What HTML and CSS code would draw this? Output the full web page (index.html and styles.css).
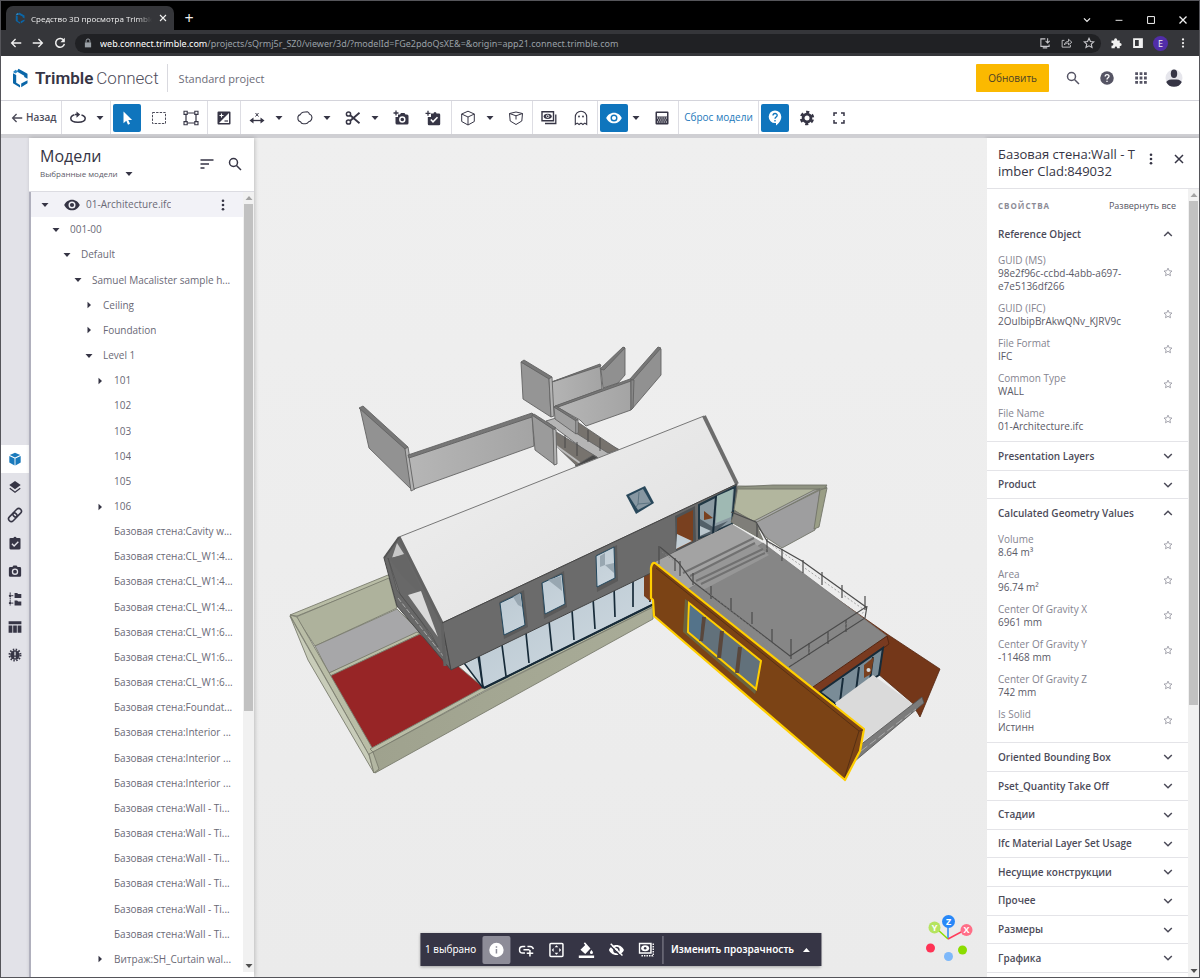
FILE: index.html
```html
<!DOCTYPE html>
<html lang="ru">
<head>
<meta charset="utf-8">
<title>Средство 3D просмотра Trimble Connect</title>
<link rel="stylesheet" href="styles.css">
</head>
<body>
<svg class="sprite" aria-hidden="true">
  <symbol id="i-logo" viewBox="0 0 18 20"><path d="M7.500 .8 16.500 5.800v5l-3.300-1.900V7.700L5.800 3.600zM2 5.200l3.200 1.900v7.700L9 16.900v2.500L2 15.200zM16.500 12.300v2.900l-6.300 4v-3.800z" fill="#0a66a8"/><path d="m4.500 1.800 2.800 1.700-3 1.900L2 4z" fill="#2b88c8"/></symbol>
  <symbol id="i-down" viewBox="0 0 8 8"><path d="M.5 2h7L4 6z"/></symbol>
  <symbol id="i-right" viewBox="0 0 8 8"><path d="M2.500 .8v6.400L6 4z"/></symbol>
  <symbol id="i-up" viewBox="0 0 8 8"><path d="M.5 6h7L4 2z"/></symbol>
  <symbol id="i-dots" viewBox="0 0 16 16"><circle cx="8" cy="3.200" r="1.500"/><circle cx="8" cy="8" r="1.500"/><circle cx="8" cy="12.800" r="1.500"/></symbol>
  <symbol id="i-search" viewBox="0 0 16 16"><g fill="none" stroke="currentColor" stroke-width="1.500"><circle cx="6.500" cy="6.500" r="4"/><path d="m9.500 9.500 4.500 4.500"/></g></symbol>
  <symbol id="i-close" viewBox="0 0 16 16"><path d="m4 4 8 8M12 4l-8 8" fill="none" stroke="currentColor" stroke-width="1.500"/></symbol>
  <symbol id="i-back" viewBox="0 0 16 16"><path d="M14 8H3M7.500 3.500 3 8l4.500 4.500" fill="none" stroke="currentColor" stroke-width="1.500"/></symbol>
  <symbol id="i-fwd" viewBox="0 0 16 16"><path d="M2 8h11M8.500 3.500 13 8l-4.500 4.500" fill="none" stroke="currentColor" stroke-width="1.500"/></symbol>
  <symbol id="i-reload" viewBox="0 0 16 16"><path d="M12.500 5.500A5 5 0 1 0 13 9" fill="none" stroke="currentColor" stroke-width="1.700"/><path d="M13.500 2v5h-5z"/></symbol>
  <symbol id="i-orbit" viewBox="0 0 16 16"><path d="M4.500 4.800C2.300 5.400.8 6.700.8 8.500c0 2.200 3 3.700 7.200 3.700s7.200-1.500 7.200-3.700c0-1.800-1.400-3-3.700-3.600M5 4.600h3" fill="none" stroke="currentColor" stroke-width="1.500"/><path d="M6.500 1.500v6.200l3.700-3.100z"/></symbol>
  <symbol id="i-cursor" viewBox="0 0 16 16"><path d="M4.500 1.500v11.800l2.800-2.600 1.700 4 2-.9-1.700-3.800h3.800z"/></symbol>
  <symbol id="i-marquee" viewBox="0 0 16 16"><path d="M1.500 2.500h13v11h-13z" fill="none" stroke="currentColor" stroke-width=".9" stroke-dasharray="2.400 1.200"/></symbol>
  <symbol id="i-area" viewBox="0 0 16 16"><path d="M3 3h10v10H3z" fill="none" stroke="currentColor" stroke-width="1.200"/><g fill="#fff" stroke="currentColor" stroke-width="1.100"><path d="M1 1.200h3.200v3.200H1zM11.800 1.200H15v3.200h-3.200zM1 11.600h3.200v3.200H1zM11.800 11.600H15v3.200h-3.200z"/></g></symbol>
  <symbol id="i-contrast" viewBox="0 0 16 16"><path d="M2.500 1.500h11a1 1 0 0 1 1 1v11a1 1 0 0 1-1 1h-11a1 1 0 0 1-1-1v-11a1 1 0 0 1 1-1z"/><path d="M13 3v10H3z" fill="#fff"/><path d="M3.500 5.500h4M5.500 3.500v4" stroke="#fff" stroke-width="1.100"/><path d="M8.500 11h3.500" stroke="currentColor" stroke-width="1.200"/></symbol>
  <symbol id="i-measure" viewBox="0 0 16 16"><path d="M2 10.500h12" stroke="currentColor" stroke-width="1.300"/><path d="M4.500 7.500v6L.5 10.500zM11.500 7.500v6l4-3z"/><path d="m6.500 3 3 3.500m0-3.500-3 3.500" stroke="currentColor" fill="none"/></symbol>
  <symbol id="i-lasso" viewBox="0 0 16 16"><path d="M6 2.300 10.300 1.800q1.700.4 2 2.100 2.600.9 2.700 3.300l-.5 2.300q-.8 2-2.800 2.200-1.300 2-3.300 2H6.200q-1.900-.2-2.700-2Q1.500 11.500 1 9.500L.9 6.800Q1.500 5 3.300 4.600 4 2.700 6 2.300z" fill="none" stroke="currentColor" stroke-width="1.100"/></symbol>
  <symbol id="i-cut" viewBox="0 0 16 16"><g fill="none" stroke="currentColor"><circle cx="3.500" cy="4" r="2.100" stroke-width="1.500"/><circle cx="3.500" cy="12" r="2.100" stroke-width="1.500"/><path d="m5.200 5.300 9.300 8M5.200 10.700l9.300-8" stroke-width="1.800"/></g></symbol>
  <symbol id="i-camadd" viewBox="0 0 16 16"><path d="M5 4.500h2L8 3h3.500l1 1.500H14a1.500 1.500 0 0 1 1.500 1.500v7a1.500 1.500 0 0 1-1.500 1.500H4A1.500 1.500 0 0 1 2.500 13V7H5z"/><circle cx="9.300" cy="9.500" r="2.500" fill="none" stroke="#fff" stroke-width="1.400"/><path d="M3 .5v5M.5 3h5" stroke="currentColor" stroke-width="1.300"/></symbol>
  <symbol id="i-taskadd" viewBox="0 0 16 16"><path d="M6 3.500h2.500a1.500 1.500 0 0 1 3 0H14a1.200 1.200 0 0 1 1.200 1.200V14a1.200 1.200 0 0 1-1.200 1.200H4A1.200 1.200 0 0 1 2.800 14V7H6z"/><path d="m5.800 9.500 2.200 2.300 4.500-4.500" fill="none" stroke="#fff" stroke-width="1.600"/><path d="M3 .8v5M.5 3.300h5" stroke="currentColor" stroke-width="1.300"/></symbol>
  <symbol id="i-cube" viewBox="0 0 16 16"><path d="M8 1.200 14.300 4v7.500L8 15l-6.300-3.500V4zM1.700 4 8 7l6.300-3M8 7v8" fill="none" stroke="currentColor" stroke-width="1"/></symbol>
  <symbol id="i-box" viewBox="0 0 16 16"><path d="M1.500 3.500 8 2l6.500 1.500-.7 7.500L8 14.500 2.200 11zM1.500 3.500 8 5.800l6.500-2.300M8 5.800v3.700" fill="none" stroke="currentColor" stroke-width="1"/></symbol>
  <symbol id="i-views" viewBox="0 0 16 16"><path d="M1 1.800h11.500v9H1z" fill="none" stroke="currentColor" stroke-width="1.400"/><path d="M14.800 4.500v9H4" fill="none" stroke="currentColor" stroke-width="1.300"/><ellipse cx="6.700" cy="6.300" rx="4" ry="2.600"/><circle cx="6.700" cy="6.300" r="1.300" fill="none" stroke="#fff" stroke-width=".9"/></symbol>
  <symbol id="i-ghost" viewBox="0 0 16 16"><path d="M2.300 14.500V7a5.700 5.700 0 0 1 11.400 0v7.500l-1.900-1.400-1.900 1.400L8 13.100l-1.900 1.400-1.900-1.400z" fill="none" stroke="currentColor" stroke-width="1.100"/><circle cx="6" cy="6.500" r=".9"/><circle cx="10" cy="6.500" r=".9"/></symbol>
  <symbol id="i-eye" viewBox="0 0 16 16"><path d="M8 2.700C4.400 2.700 1.500 5 .2 8c1.300 3 4.200 5.300 7.800 5.300S14.500 11 15.800 8C14.500 5 11.600 2.700 8 2.700zM8 4.500a3.500 3.500 0 1 1 0 7 3.500 3.500 0 0 1 0-7z" fill-rule="evenodd"/><circle cx="8" cy="8" r="2.100"/></symbol>
  <symbol id="i-halftone" viewBox="0 0 16 16"><path d="M2.500 1.500h11a1 1 0 0 1 1 1v11a1 1 0 0 1-1 1h-11a1 1 0 0 1-1-1v-11a1 1 0 0 1 1-1z"/><path d="M3 3h10v3.500H3z" fill="#fff"/><path d="M3 8h10M4 10h9M3 12h10" stroke="#fff" stroke-width="1.100" stroke-dasharray="1.200 1"/></symbol>
  <symbol id="i-helpbub" viewBox="0 0 16 16"><path d="M8 .5a6.300 6.300 0 0 1 6.300 6.300c0 4-3 7-5.300 8.700v-2.400H8A6.300 6.300 0 0 1 8 .5z"/><path d="M6 5.500c0-2.700 4.200-2.600 4.200-.2C10.200 7 8 7 8 8.800M8 10v1.400" fill="none" stroke="#0f75bd" stroke-width="1.300"/></symbol>
  <symbol id="i-gear" viewBox="0 0 16 16"><g fill="none" stroke="currentColor"><circle cx="8" cy="8" r="3.900" stroke-width="2.800"/><circle cx="8" cy="8" r="6" stroke-width="2.400" stroke-dasharray="3.140 3.140" stroke-dashoffset="-1.570"/></g></symbol>
  <symbol id="i-full" viewBox="0 0 16 16"><path d="M6 3H3v3M10 3h3v3M6 13H3v-3M10 13h3v-3" fill="none" stroke="currentColor" stroke-width="1.500"/></symbol>
  <symbol id="i-help" viewBox="0 0 16 16"><circle cx="8" cy="8" r="7.700"/><path d="M5.900 6.300c0-2.900 4.400-2.800 4.400-.2C10.300 7.800 8 7.800 8 9.700M8 11v1.600" fill="none" stroke="#fff" stroke-width="1.500"/></symbol>
  <symbol id="i-apps" viewBox="0 0 16 16"><path d="M2.200 2.200H5V5H2.200zM6.600 2.200h2.800V5H6.600zM11 2.200h2.800V5H11zM2.200 6.600H5v2.800H2.200zM6.600 6.600h2.800v2.800H6.600zM11 6.600h2.800v2.800H11zM2.200 11H5v2.800H2.200zM6.600 11h2.800v2.800H6.600zM11 11h2.800v2.800H11z"/></symbol>
  <symbol id="i-user" viewBox="0 0 18 18"><circle cx="9" cy="9" r="8.500" fill="#e6e6ec"/><ellipse cx="9" cy="4.800" rx="3.200" ry="4.200"/><path d="M1.200 13c1.500-2.500 4-2.600 7.800-2.600s6.300.1 7.800 2.600a8.700 8.700 0 0 1-15.600 0z"/></symbol>
  <symbol id="i-sort" viewBox="0 0 16 16"><path d="M1.500 4h13M1.500 8h8.500M1.500 12h4" stroke="currentColor" stroke-width="1.300"/></symbol>
  <symbol id="i-model" viewBox="0 0 16 16"><path d="m8 .8 6 2.700L8 6.200 2 3.500zM1.500 4.600l6 2.700v8l-6-3.200zM14.500 4.600l-6 2.700v8l6-3.200z"/></symbol>
  <symbol id="i-layers" viewBox="0 0 16 16"><path d="m8 1 6.500 4.800L8 10.500 1.500 5.800z"/><path d="M2 9.500 8 14l6-4.500" fill="none" stroke="currentColor" stroke-width="1.500"/></symbol>
  <symbol id="i-link" viewBox="0 0 16 16"><g fill="none" stroke="currentColor" stroke-width="1.600"><rect x="5.400" y="3" width="9.600" height="5.400" rx="2.700" transform="rotate(-45 10.200 5.700)"/><rect x="1" y="7.600" width="9.600" height="5.400" rx="2.700" transform="rotate(-45 5.800 10.300)"/></g></symbol>
  <symbol id="i-task" viewBox="0 0 16 16"><path d="M3 2.200h3.200a1.900 1.900 0 0 1 3.600 0H13a1.300 1.300 0 0 1 1.300 1.300V14a1.300 1.300 0 0 1-1.300 1.300H3A1.300 1.300 0 0 1 1.700 14V3.500A1.300 1.300 0 0 1 3 2.200z"/><path d="m4.500 8.800 2.500 2.500 4.800-4.800" fill="none" stroke="#e2e2e8" stroke-width="1.600"/></symbol>
  <symbol id="i-cam" viewBox="0 0 16 16"><path d="M2.500 3.500H5l1.200-1.700h3.600L11 3.500h2.500A1.500 1.500 0 0 1 15 5v8a1.500 1.500 0 0 1-1.500 1.500h-11A1.500 1.500 0 0 1 1 13V5a1.500 1.500 0 0 1 1.500-1.500z"/><circle cx="8" cy="8.800" r="2.900" fill="none" stroke="#e2e2e8" stroke-width="1.500"/></symbol>
  <symbol id="i-tree" viewBox="0 0 16 16"><path d="M7.500 1.200h3l1 1.200h3.700v4.400H7.500zM7.500 9.700h3l1 1.200h3.700v4.400H7.500z"/><path d="M2.500 .5v15M1 4.200h5.800M1 12.700h5.800" stroke="currentColor" stroke-width="1.100" stroke-dasharray="2.200 .7"/><circle cx="2.500" cy="4.200" r="1.400"/><circle cx="2.500" cy="12.700" r="1.400"/></symbol>
  <symbol id="i-table" viewBox="0 0 16 16"><path d="M.7 1.500h14.600v3.400H.7zM.7 6.300H5v8.200H.7zM5.900 6.300h4.200v8.200H5.900zM11 6.300h4.300v8.200H11z"/></symbol>
  <symbol id="i-issue" viewBox="0 0 16 16"><circle cx="8" cy="8" r="5.400"/><circle cx="8" cy="8" r="6.300" fill="none" stroke="currentColor" stroke-width="2.200" stroke-dasharray="1.650 1.650"/><path d="M8 4.300v4.400M8 10v1.800" stroke="#e2e2e8" stroke-width="1.500"/></symbol>
  <symbol id="i-star" viewBox="0 0 16 16"><path d="m8 1.800 1.900 4.200 4.500.5-3.400 3 1 4.500-4-2.300L4 14l1-4.500-3.400-3 4.500-.5z" fill="none" stroke="currentColor" stroke-width="1.500"/></symbol>
  <symbol id="i-chevd" viewBox="0 0 10 10"><path d="m1.200 3 3.800 3.800L8.800 3" fill="none" stroke="currentColor" stroke-width="1.500"/></symbol>
  <symbol id="i-chevu" viewBox="0 0 10 10"><path d="m1.200 7 3.800-3.800L8.800 7" fill="none" stroke="currentColor" stroke-width="1.500"/></symbol>
  <symbol id="i-info" viewBox="0 0 16 16"><circle cx="8" cy="8" r="7.200"/><path d="M8 7v4.500M8 4.300v1.500" stroke="#8d8c98" stroke-width="1.500"/></symbol>
  <symbol id="i-linkadd" viewBox="0 0 16 16"><path d="M6.500 11H4.300a3.300 3.300 0 0 1 0-6.600h2.500M9 4.400h2.700a3.300 3.300 0 0 1 3.200 2.800M5 7.700h6M11.500 8v6.500M8.300 11.300h6.500" fill="none" stroke="currentColor" stroke-width="1.500"/></symbol>
  <symbol id="i-fit" viewBox="0 0 16 16"><rect x="1.500" y="1.500" width="13" height="13" rx="1" fill="none" stroke="currentColor" stroke-width="1.500"/><path d="m8 3.300 1.900 1.900H6.100zM8 12.700l1.900-1.900H6.100zM3.300 8l1.900-1.900v3.800zM12.700 8l-1.900-1.900v3.800z"/></symbol>
  <symbol id="i-fill" viewBox="0 0 16 16"><path d="M6.500 .2 5.300 1.400l1.500 1.500L2 7.700l4.800 4.300 5.200-5.400z"/><path d="M13 8s1.500 1.700 1.500 2.600a1.500 1.500 0 0 1-3 0C11.500 9.700 13 8 13 8zM.2 13.500h15.600V16H.2z"/></symbol>
  <symbol id="i-hide" viewBox="0 0 16 16"><path d="M8 3C4.500 3 1.600 5.200.5 8c1.100 2.800 4 5 7.500 5s6.400-2.200 7.500-5C14.400 5.200 11.500 3 8 3zm0 1.800a3.200 3.200 0 1 1 0 6.400 3.200 3.200 0 0 1 0-6.400z" fill-rule="evenodd"/><circle cx="8" cy="8" r="1.700"/><path d="M1.500 3.300 13 14.800" stroke="#363545" stroke-width="1.600"/><path d="M2.300 1.800 14 13.500" stroke="currentColor" stroke-width="1.500"/></symbol>
  <symbol id="i-iso" viewBox="0 0 16 16"><path d="M1 1.500h11.500v9.500H1z" fill="none" stroke="currentColor" stroke-width="1.500"/><ellipse cx="6.700" cy="6.300" rx="4" ry="3"/><circle cx="6.700" cy="6.300" r="1.300" fill="#363545"/><path d="M14.800 1.500v12.800M3 13.800h12" stroke="currentColor" stroke-width="1.400" stroke-dasharray="1.500 1"/></symbol>
  <symbol id="i-lock" viewBox="0 0 16 16"><path d="M3 7h10v8H3z"/><path d="M5 7V4.500a3 3 0 0 1 6 0V7" fill="none" stroke="currentColor" stroke-width="1.600"/></symbol>
  <symbol id="i-install" viewBox="0 0 16 16"><path d="M8.500 2.500h-6v10h11V10M5 14.500h6" fill="none" stroke="currentColor" stroke-width="1.400"/><path d="M11.500 1.500v6M8.800 5.300l2.700 2.700 2.700-2.700" fill="none" stroke="currentColor" stroke-width="1.400"/></symbol>
  <symbol id="i-share" viewBox="0 0 16 16"><path d="M4.500 4.500h-3v9h11v-3M4.500 10.500C5 7 7.500 6 10 6V3l4.500 4L10 10.500V8c-2.500 0-4 .5-5.500 2.500z" fill="none" stroke="currentColor" stroke-width="1.200"/></symbol>
  <symbol id="i-puzzle" viewBox="0 0 16 16"><path d="M2 4.500h3.500V3.700a2 2 0 0 1 4 0v.8H13V8h.5a2 2 0 0 1 0 4H13v3H9.500v-.8a1.600 1.600 0 0 0-3.200 0v.8H2v-3.500h.8a1.700 1.700 0 0 0 0-3.400H2z"/></symbol>
  <symbol id="i-side" viewBox="0 0 16 16"><path d="M1.500 1.500h13v13h-13zM4 4v8h5V4z" fill-rule="evenodd"/></symbol>
  <symbol id="i-min" viewBox="0 0 16 16"><path d="M2.500 8.500h11" stroke="currentColor" stroke-width="1.500"/></symbol>
  <symbol id="i-max" viewBox="0 0 16 16"><path d="M2.500 2.500h11v11h-11z" fill="none" stroke="currentColor" stroke-width="1.600"/></symbol>
</svg>

<header class="browser">
  <div class="tabs">
    <div class="tab"><svg class="ic12"><use href="#i-logo"/></svg><span class="tab-title">Средство 3D просмотра Trimble</span><button class="tab-x" aria-label="Закрыть вкладку"><svg class="ic12"><use href="#i-close"/></svg></button></div>
    <button class="newtab" aria-label="Новая вкладка">+</button>
    <div class="winbtns">
      <button aria-label="Поиск вкладок"><svg class="ic8"><use href="#i-chevd"/></svg></button>
      <button aria-label="Свернуть"><svg class="ic10"><use href="#i-min"/></svg></button>
      <button aria-label="Развернуть"><svg class="ic10"><use href="#i-max"/></svg></button>
      <button aria-label="Закрыть"><svg class="ic14"><use href="#i-close"/></svg></button>
    </div>
  </div>
  <div class="navbar">
    <button aria-label="Назад"><svg class="ic14"><use href="#i-back"/></svg></button>
    <button aria-label="Вперед"><svg class="ic14"><use href="#i-fwd"/></svg></button>
    <button aria-label="Обновить"><svg class="ic14"><use href="#i-reload"/></svg></button>
    <div class="omnibox">
      <svg class="ic10"><use href="#i-lock"/></svg>
      <div class="url"><b>web.connect.trimble.com</b>/projects/sQrmj5r_SZ0/viewer/3d/?modelId=FGe2pdoQsXE&amp;=&amp;origin=app21.connect.trimble.com</div>
      <div class="omni-actions"><svg class="ic12"><use href="#i-install"/></svg><svg class="ic12"><use href="#i-share"/></svg><svg class="ic12"><use href="#i-star"/></svg></div>
    </div>
    <button aria-label="Расширения"><svg class="ic12"><use href="#i-puzzle"/></svg></button>
    <button aria-label="Боковая панель"><svg class="ic12"><use href="#i-side"/></svg></button>
    <button class="profile" aria-label="Профиль">E</button>
    <button aria-label="Меню"><svg class="ic12"><use href="#i-dots"/></svg></button>
  </div>
</header>

<div class="apphead">
  <a class="brand" href="#"><svg class="logo"><use href="#i-logo"/></svg><b>Trimble</b><span>Connect</span></a>
  <span class="project">Standard project</span>
  <button class="upgrade">Обновить</button>
  <button class="head-btn" aria-label="Поиск"><svg class="ic16"><use href="#i-search"/></svg></button>
  <button class="head-btn" aria-label="Справка"><svg class="ic14"><use href="#i-help"/></svg></button>
  <button class="head-btn" aria-label="Приложения"><svg class="ic16"><use href="#i-apps"/></svg></button>
  <button class="head-btn" aria-label="Учетная запись"><svg class="ic18"><use href="#i-user"/></svg></button>
</div>

<nav class="toolbar" aria-label="Инструменты">
  <div class="group back"><button class="backbtn"><svg class="ic14"><use href="#i-back"/></svg>Назад</button></div>
  <div class="group"><button class="tool" aria-label="Орбита"><svg class="ic16"><use href="#i-orbit"/></svg></button><button class="caret" aria-label="Режимы"><svg><use href="#i-down"/></svg></button></div>
  <div class="group"><button class="tool on" aria-label="Выбор"><svg class="ic16"><use href="#i-cursor"/></svg></button><button class="tool" aria-label="Рамка"><svg class="ic16"><use href="#i-marquee"/></svg></button><button class="tool" aria-label="Область"><svg class="ic16"><use href="#i-area"/></svg></button></div>
  <div class="group"><button class="tool" aria-label="Контраст"><svg class="ic16"><use href="#i-contrast"/></svg></button></div>
  <div class="group wide"><button class="tool" aria-label="Измерение"><svg class="ic16"><use href="#i-measure"/></svg></button><button class="caret" aria-label="Виды измерений"><svg><use href="#i-down"/></svg></button><button class="tool" aria-label="Пометка"><svg class="ic16"><use href="#i-lasso"/></svg></button><button class="caret" aria-label="Виды пометок"><svg><use href="#i-down"/></svg></button><button class="tool" aria-label="Сечение"><svg class="ic16"><use href="#i-cut"/></svg></button><button class="caret" aria-label="Виды сечений"><svg><use href="#i-down"/></svg></button><button class="tool" aria-label="Добавить вид"><svg class="ic16"><use href="#i-camadd"/></svg></button><button class="tool" aria-label="Добавить задачу"><svg class="ic16"><use href="#i-taskadd"/></svg></button></div>
  <div class="group"><button class="tool" aria-label="Куб"><svg class="ic16"><use href="#i-cube"/></svg></button><button class="caret" aria-label="Виды куба"><svg><use href="#i-down"/></svg></button><button class="tool" aria-label="Перспектива"><svg class="ic16"><use href="#i-box"/></svg></button></div>
  <div class="group"><button class="tool" aria-label="Изолировать"><svg class="ic16"><use href="#i-views"/></svg></button><button class="tool" aria-label="Призрак"><svg class="ic16"><use href="#i-ghost"/></svg></button></div>
  <div class="group"><button class="tool on" aria-label="Видимость"><svg class="ic16"><use href="#i-eye"/></svg></button><button class="caret" aria-label="Режимы видимости"><svg><use href="#i-down"/></svg></button><button class="tool" aria-label="Прозрачность"><svg class="ic16"><use href="#i-halftone"/></svg></button></div>
  <div class="group"><button class="reset">Сброс модели</button></div>
  <div class="group last"><button class="tool on" aria-label="Помощь"><svg class="ic16"><use href="#i-helpbub"/></svg></button><button class="tool" aria-label="Настройки"><svg class="ic16"><use href="#i-gear"/></svg></button><button class="tool" aria-label="Полный экран"><svg class="ic16"><use href="#i-full"/></svg></button></div>
</nav>

<main class="workspace">
  <nav class="rail" aria-label="Панели">
    <button class="active" aria-label="Модели"><svg class="ic14"><use href="#i-model"/></svg></button>
    <button aria-label="Слои"><svg class="ic14"><use href="#i-layers"/></svg></button>
    <button aria-label="Ссылки"><svg class="ic16"><use href="#i-link"/></svg></button>
    <button aria-label="Задачи"><svg class="ic14"><use href="#i-task"/></svg></button>
    <button aria-label="Виды"><svg class="ic14"><use href="#i-cam"/></svg></button>
    <button aria-label="Структура"><svg class="ic14"><use href="#i-tree"/></svg></button>
    <button aria-label="Таблица"><svg class="ic14"><use href="#i-table"/></svg></button>
    <button aria-label="Конфликты"><svg class="ic14"><use href="#i-issue"/></svg></button>
  </nav>

  <aside class="models">
    <div class="models-head">
      <div class="models-titles"><h1>Модели</h1><button class="filter">Выбранные модели<svg class="ic8"><use href="#i-down"/></svg></button></div>
      <button aria-label="Сортировка"><svg class="ic16"><use href="#i-sort"/></svg></button>
      <button aria-label="Поиск"><svg class="ic16"><use href="#i-search"/></svg></button>
    </div>
    <div class="models-body">
      <ul class="tree">
        <li class="root"><svg class="ic8"><use href="#i-down"/></svg><svg class="ic16 vis"><use href="#i-eye"/></svg><span>01-Architecture.ifc</span><button aria-label="Действия"><svg class="ic14"><use href="#i-dots"/></svg></button></li>
        <li class="l1"><svg class="ic8"><use href="#i-down"/></svg><span>001-00</span></li>
        <li class="l2"><svg class="ic8"><use href="#i-down"/></svg><span>Default</span></li>
        <li class="l3"><svg class="ic8"><use href="#i-down"/></svg><span>Samuel Macalister sample h...</span></li>
        <li class="l4"><svg class="ic8"><use href="#i-right"/></svg><span>Ceiling</span></li>
        <li class="l4"><svg class="ic8"><use href="#i-right"/></svg><span>Foundation</span></li>
        <li class="l4"><svg class="ic8"><use href="#i-down"/></svg><span>Level 1</span></li>
        <li class="l5"><svg class="ic8"><use href="#i-right"/></svg><span>101</span></li>
        <li class="l5 leaf"><span>102</span></li>
        <li class="l5 leaf"><span>103</span></li>
        <li class="l5 leaf"><span>104</span></li>
        <li class="l5 leaf"><span>105</span></li>
        <li class="l5"><svg class="ic8"><use href="#i-right"/></svg><span>106</span></li>
        <li class="l5 leaf"><span>Базовая стена:Cavity w...</span></li>
        <li class="l5 leaf"><span>Базовая стена:CL_W1:4...</span></li>
        <li class="l5 leaf"><span>Базовая стена:CL_W1:4...</span></li>
        <li class="l5 leaf"><span>Базовая стена:CL_W1:4...</span></li>
        <li class="l5 leaf"><span>Базовая стена:CL_W1:6...</span></li>
        <li class="l5 leaf"><span>Базовая стена:CL_W1:6...</span></li>
        <li class="l5 leaf"><span>Базовая стена:CL_W1:6...</span></li>
        <li class="l5 leaf"><span>Базовая стена:Foundat...</span></li>
        <li class="l5 leaf"><span>Базовая стена:Interior ...</span></li>
        <li class="l5 leaf"><span>Базовая стена:Interior ...</span></li>
        <li class="l5 leaf"><span>Базовая стена:Interior ...</span></li>
        <li class="l5 leaf"><span>Базовая стена:Wall - Ti...</span></li>
        <li class="l5 leaf"><span>Базовая стена:Wall - Ti...</span></li>
        <li class="l5 leaf"><span>Базовая стена:Wall - Ti...</span></li>
        <li class="l5 leaf"><span>Базовая стена:Wall - Ti...</span></li>
        <li class="l5 leaf"><span>Базовая стена:Wall - Ti...</span></li>
        <li class="l5 leaf"><span>Базовая стена:Wall - Ti...</span></li>
        <li class="l5"><svg class="ic8"><use href="#i-right"/></svg><span>Витраж:SH_Curtain wal...</span></li>
      </ul>
      <div class="scroll"><svg class="ic8 dim"><use href="#i-up"/></svg><div class="track"><div class="thumb thumb-tree"></div></div><svg class="ic8"><use href="#i-down"/></svg></div>
    </div>
  </aside>

  <section class="canvas" aria-label="3D вид">
    <svg class="scene" viewBox="254 138 733 839" role="img" aria-label="Модель дома">
      <defs>
        <linearGradient id="roof" x1="0" y1="0" x2="1" y2="1"><stop offset="0" stop-color="#f0f0f0"/><stop offset="1" stop-color="#dedede"/></linearGradient>
        <linearGradient id="wall" x1="0" y1="0" x2="1" y2="0"><stop offset="0" stop-color="#b6b6b6"/><stop offset="1" stop-color="#a4a4a4"/></linearGradient>
        <linearGradient id="green" x1="0" y1="0" x2="1" y2="0"><stop offset="0" stop-color="#9fa28e"/><stop offset="1" stop-color="#a9ac98"/></linearGradient>
        <linearGradient id="glass" x1="0" y1="0" x2="1" y2="1"><stop offset="0" stop-color="#b4c3cd"/><stop offset="1" stop-color="#d3dde4"/></linearGradient>
      </defs>
      <g stroke="#636363" stroke-width=".9" stroke-linejoin="round">
        <path d="m360 408 45 40 7 42-43-42z" fill="#929292"/><path d="m359 408 4-2 45 41-3 2z" fill="#777"/><path d="m405 449 3-2 7 42-4 2z" fill="#b3b3b3"/>
        <path d="m409 457 123-42 2 31-120 43z" fill="url(#wall)"/><path d="m408 455 124-42 2 2-2 2-123 41z" fill="#777"/>
        <path d="m546 384 54-19 2 24-54 20z" fill="url(#wall)"/><path d="m546 384 55-18-1-2-54 20z" fill="#777"/>
        <path d="m521 362 28 16 2 39-28-18z" fill="#959595"/><path d="m521 362 3-2 28 17-3 2z" fill="#777"/><path d="m549 379 3-2 2 39-3 1z" fill="#b3b3b3"/>
        <path d="m601 370 23-23 1 1v27l-7 8-15 5z" fill="#909090"/><path d="m600 369 23-22 2 1-21 22z" fill="#777"/>
        <path d="m557 407 74-27v30l-45 16-6-6z" fill="url(#wall)"/><path d="m555 406 75-27 1 2-73 26z" fill="#777"/>
        <path d="m631 379 28-31 2 1v26l-29 34z" fill="#919191"/><path d="m630 379 28-32 3 1-28 32z" fill="#777"/><path d="M631 380h3l-1 28-2 2z" fill="#888"/>
        <path d="m546 421 10-3 64 32-22 10z" fill="#b5b5b5"/>
        <path d="m553 430 44 27-20 9-23-22z" fill="#77736e"/><path d="m555 445 29 21" fill="none" stroke="#bbb" stroke-width="2"/>
        <path d="m576 421 43 29-11 3-32-20z" fill="#77736e"/><path d="M565 435v13m12-6v14M588 430v12m12-4v13" stroke="#444"/>
        <path d="m554 407 22 13v14l-21-15z" fill="#a0a0a0"/><path d="m554 407 2-1 22 14-2 1z" fill="#777"/><path d="M576 420h2v13l-2 1z" fill="#b3b3b3"/>
        <path d="m532 415 21 14 2 36-20-15z" fill="#9b9b9b"/><path d="m532 415 2-1 22 14-3 1z" fill="#777"/><path d="m553 429 3 1 1 34-3 1z" fill="#b3b3b3"/>
        <path d="m575 466 18-11 5 3-20 8z" fill="#484848"/>
      </g>
      <g stroke="#7b7d6e" stroke-width=".9" stroke-linejoin="round">
        <path d="m290 615 98-40 4 3-95 38z" fill="#b9bda6"/><path d="m296 617 93-39 8 30-82 38z" fill="#aeb29c"/>
        <path d="m315 646 82-37 23 23-91 41z" fill="#a7a7a9"/><path d="m329 673 88-41 3 2-89 42z" fill="#b9bda6"/>
        <path d="m330 676 90-42 64 54-114 61z" fill="#972526"/>
        <path d="m290 615 7 2 77 134-5 4z" fill="#b9bda6"/><path d="m290 616 79 139 5 18-66-113z" fill="#c8ccb9"/>
        <path d="m370 749 114-62 169-85v5l-169 84-111 61z" fill="#b9bda6"/><path d="m373 752 111-60 169-85v12L375 773z" fill="url(#green)"/><path d="m369 754 4-2 6 17-5 4z" fill="#b3b7a2"/>
      </g>
      <path d="m466 660 162-80 23-10 3 34-170 84z" fill="url(#glass)" stroke="#172b39" stroke-width="1.500"/>
      <path d="m483 688-19-25 14-7z" fill="#c4d0d8" stroke="#172b39" stroke-width="1.500"/>
      <g stroke="#172b39" stroke-width="1.700"><path d="m479 655 4 33M502 645l4 31M526 633l3 30M549 621l3 30M572 610l2 30M593 598l2 31M614 587l1 30M633 577v30M650 568v34"/><path d="m484 688 170-84" stroke-width="2.200"/></g>
      <path d="m644 574 7-4v32l-7-6z" fill="#79401f"/>
      <path d="m399 537 43 86 9 47-54-64-13-48z" fill="#686868" stroke="#484848"/>
      <path d="m397 543 7 11-12 4z" fill="#c8c8c8"/><path d="m389 558 16-3 24 50-10-12-19-20z" fill="#666"/><path d="m388 558 9 32 24 31 17 26-7-13-31-40z" fill="#7d7d7d" stroke="#505050" stroke-width=".7"/>
      <path d="m408 595 13-4 17 46z" fill="#dadada"/><path d="m398 598 46 59" stroke="#bbb" stroke-width=".8" stroke-dasharray="5 2" fill="none"/>
      <path d="m442 623 295-139-2 38-60 30-21 11-3 10-200 97z" fill="#6b6b6b" stroke="#454545"/>
      <path d="m399 537 305-121 33 68-295 139z" fill="url(#roof)" stroke="#777"/>
      <path d="m399 537 43 86 3 43" fill="none" stroke="#626262" stroke-width="3"/><path d="m384 558 15-21" stroke="#555" stroke-width="2"/><path d="m704 416 33 68" stroke="#6d6d6d" stroke-width="4"/>
      <path d="m442 623 295-139" stroke="#444"/>
      <g fill="#5a5a5a"><path d="m499 602 25-12 4 37-24 12zM541 583l23-12 3 36-23 12zM596 555l21-10 1 36-21 11z"/></g>
      <g fill="url(#glass)" stroke="#24485e" stroke-width="1"><path d="m500 603 21-10 4 32-21 10zM542 583l20-9 3 30-20 10zM596 556l18-9 1 31-18 9z"/></g>
      <path d="m513 597 7-4 2 14-4-2zM548 580l14 11-1-15zM600 556v11l5-2v-12zM605 565l9 8v-10z" fill="#98a7b1"/>
      <path d="m626 495 19-9 9 17-18 11z" fill="#29485b"/><path d="m629 496 14-7 8 14-13 7z" fill="#8797a2"/><path d="m639 492-1 12 12-1M638 504l-2 3" stroke="#5c7482" fill="none"/>
      <path d="m675 516 20-10 1 36-20 10z" fill="#4f5254"/><path d="m677 518 16-8v31l-16 8z" fill="#79401f"/><path d="m677 534 15 7-16 8z" fill="#c3ced5"/>
      <path d="m699 505 36-18-3 37-33 14z" fill="#8b9aa2" stroke="#213744" stroke-width="2"/><path d="m717 496 16-7-2 28-15 6z" fill="#9fb9b3"/><path d="m700 519 13 8 15-6-14 12-14 4z" fill="#536069"/><path d="m704 511 9 7-9 2z" fill="#79401f"/><path d="m700 526 11 5-11 5z" fill="#bac6cd"/><path d="m716 496-3 38" stroke="#172b39" stroke-width="2"/>
      <g stroke="#73756a" stroke-width=".9" stroke-linejoin="round"><path d="m738 486 89 1-3 4-49 24-21 8-20-13z" fill="#b2b69e"/><path d="m737 487 36-2h54l-3 4h-86z" fill="#8f9381"/><path d="m754 523 66-33-5 40-33 18-15-10z" fill="#9e9e9f"/><path d="m754 521 60-31 6-1-65 34z" fill="#aaa"/><path d="m820 490 7-2-8 39-5 2z" fill="#9a9e86"/><path d="m735 511 20 11 8 18-32-18z" fill="#7f7e79"/></g>
      <path d="m757 543 130 91 53 35-20 48-9-15-34-29v-38l-124-91z" fill="#743719" stroke="#552712" stroke-width=".8"/>
      <path d="m655 562 20-10 57-28 31 19-60 48-14 1z" fill="#a3a3a3"/>
      <path d="m763 543 124 93-74 51-126-97z" fill="#868686" stroke="#777" stroke-width=".8"/>
      <path d="m688 577 66-34 15 12-66 35z" fill="#979797"/><path d="m683 573 71-35M690 576l65-33M696 581l67-32M701 584l64-31" stroke="#717171" stroke-width="2" fill="none"/>
      <path d="m887 636 2 8-69 50-7-7z" fill="#793a20" stroke="#552712"/>
      <path d="m820 692 63-44-4 27-43 29z" fill="#7a8c97" stroke="#172b39" stroke-width="2"/><path d="m843 678-3 24m19-35-3 24m17-34-3 23" stroke="#172b39" stroke-width="2"/><path d="m864 665 10-8-3 17-7 4z" fill="#79401f"/><circle cx="868.500" cy="670" r="2" fill="#d8dde0"/>
      <path d="m835 703 38-28 40 29-52 39z" fill="#dadada"/>
      <path d="m922 697 2 6-69 58 4-15z" fill="#7b7b7b" stroke="#505050" stroke-width=".8"/><path d="m861 751 55-42" stroke="#aaa" stroke-dasharray="8 3"/>
      <g fill="none" stroke="#4b4b4b" stroke-width="1.200"><path d="m731 512 25 10 11 19 35 20 64 46-76 49-98-75-14-19-18-15M867 606l-2 12-76 49"/><path d="M659 546v18m16-6v13m5-10v15m13-3v12m18 1v13m20-1v12m21 2v12m20 5v13m19-3v12m0-2 0 10M809 643v12m19-23v12m18-24v12M757 524v13m10 2v13m15-3v12m21-1v13m19-1v13m20 0v13m23-2v14"/></g>
      <g fill="none" stroke="#848484" stroke-width=".7" stroke-dasharray="2 2"><path d="m769 543 94 66M766 548l88 64M662 552l15 11M701 587l87 69M697 591l87 69M792 660l72-48M792 664l70-47"/></g>
      <path d="m655 563 209 166-4 22-15 29-191-164-1-16-2-2v-30q1-6 4-5z" fill="#7b4315" stroke="#ffce00" stroke-width="2.200" stroke-linejoin="round"/>
      <path d="m656 568 203 163-14 45M859 731l4-1" fill="none" stroke="#573014" stroke-width="1"/>
      <path d="m685 599 3 2v30l69 57-2 6-72-62z" fill="#6a633f"/><path d="m689 603 72 58-5 28-68-57z" fill="#62717b" stroke="#ffce00" stroke-width="2"/>
      <path d="m704 617-3 24m21-10-3 27m21-11-3 26" stroke="#59473c" stroke-width="4"/><path d="m690 605 12 11-2 24-11-9z" fill="#54738a"/>
      <g stroke-width="1.500"><path d="M948 939v-15" stroke="#2888f8"/><path d="m948 939-11-10" stroke="#8bdc00"/><path d="m948 939 15-8" stroke="#ff3e5c"/></g>
      <circle cx="930.500" cy="948" r="4.500" fill="#ff3355"/><circle cx="948.500" cy="956.500" r="4.500" fill="#7db8fa"/><circle cx="962.500" cy="950" r="4.500" fill="#8bdc00"/>
      <circle cx="934.500" cy="927.500" r="6" fill="#b5e45f"/><circle cx="948.500" cy="921.500" r="6.500" fill="#2888f8"/><circle cx="966.500" cy="930" r="6" fill="#ff6f87"/>
      <g class="axis"><text x="934.500" y="931">Y</text><text x="948.500" y="925">Z</text><text x="966.500" y="933">X</text></g>
    </svg>
    <div class="selbar">
      <span class="count">1 выбрано</span>
      <button class="sel on" aria-label="Сведения"><svg class="ic16"><use href="#i-info"/></svg></button>
      <button class="sel" aria-label="Добавить ссылку"><svg class="ic16"><use href="#i-linkadd"/></svg></button>
      <button class="sel" aria-label="Вписать"><svg class="ic16"><use href="#i-fit"/></svg></button>
      <button class="sel" aria-label="Цвет"><svg class="ic16"><use href="#i-fill"/></svg></button>
      <button class="sel" aria-label="Скрыть"><svg class="ic16"><use href="#i-hide"/></svg></button>
      <button class="sel" aria-label="Изолировать"><svg class="ic16"><use href="#i-iso"/></svg></button>
      <button class="opacity">Изменить прозрачность<svg class="ic8"><use href="#i-up"/></svg></button>
    </div>
  </section>

  <aside class="props">
    <div class="props-head"><h2>Базовая стена:Wall - T<br>imber Clad:849032</h2><button aria-label="Действия"><svg class="ic14"><use href="#i-dots"/></svg></button><button aria-label="Закрыть"><svg class="ic16"><use href="#i-close"/></svg></button></div>
    <div class="props-body">
      <div class="sections">
        <div class="caption"><span>СВОЙСТВА</span><button>Развернуть все</button></div>
        <section class="open first">
          <button class="sec">Reference Object<svg class="ic10"><use href="#i-chevu"/></svg></button>
          <dl>
            <div><dt>GUID (MS)</dt><dd>98e2f96c-ccbd-4abb-a697-<br>e7e5136df266</dd><button aria-label="В избранное"><svg class="ic10"><use href="#i-star"/></svg></button></div>
            <div><dt>GUID (IFC)</dt><dd>2OulbipBrAkwQNv_KJRV9c</dd><button aria-label="В избранное"><svg class="ic10"><use href="#i-star"/></svg></button></div>
            <div><dt>File Format</dt><dd>IFC</dd><button aria-label="В избранное"><svg class="ic10"><use href="#i-star"/></svg></button></div>
            <div><dt>Common Type</dt><dd>WALL</dd><button aria-label="В избранное"><svg class="ic10"><use href="#i-star"/></svg></button></div>
            <div><dt>File Name</dt><dd>01-Architecture.ifc</dd><button aria-label="В избранное"><svg class="ic10"><use href="#i-star"/></svg></button></div>
          </dl>
        </section>
        <section><button class="sec">Presentation Layers<svg class="ic10"><use href="#i-chevd"/></svg></button></section>
        <section><button class="sec">Product<svg class="ic10"><use href="#i-chevd"/></svg></button></section>
        <section class="open">
          <button class="sec">Calculated Geometry Values<svg class="ic10"><use href="#i-chevu"/></svg></button>
          <dl>
            <div><dt>Volume</dt><dd>8.64 m³</dd><button aria-label="В избранное"><svg class="ic10"><use href="#i-star"/></svg></button></div>
            <div><dt>Area</dt><dd>96.74 m²</dd><button aria-label="В избранное"><svg class="ic10"><use href="#i-star"/></svg></button></div>
            <div><dt>Center Of Gravity X</dt><dd>6961 mm</dd><button aria-label="В избранное"><svg class="ic10"><use href="#i-star"/></svg></button></div>
            <div><dt>Center Of Gravity Y</dt><dd>-11468 mm</dd><button aria-label="В избранное"><svg class="ic10"><use href="#i-star"/></svg></button></div>
            <div><dt>Center Of Gravity Z</dt><dd>742 mm</dd><button aria-label="В избранное"><svg class="ic10"><use href="#i-star"/></svg></button></div>
            <div><dt>Is Solid</dt><dd>Истинн</dd><button aria-label="В избранное"><svg class="ic10"><use href="#i-star"/></svg></button></div>
          </dl>
        </section>
        <section><button class="sec">Oriented Bounding Box<svg class="ic10"><use href="#i-chevd"/></svg></button></section>
        <section><button class="sec">Pset_Quantity Take Off<svg class="ic10"><use href="#i-chevd"/></svg></button></section>
        <section><button class="sec">Стадии<svg class="ic10"><use href="#i-chevd"/></svg></button></section>
        <section><button class="sec">Ifc Material Layer Set Usage<svg class="ic10"><use href="#i-chevd"/></svg></button></section>
        <section><button class="sec">Несущие конструкции<svg class="ic10"><use href="#i-chevd"/></svg></button></section>
        <section><button class="sec">Прочее<svg class="ic10"><use href="#i-chevd"/></svg></button></section>
        <section><button class="sec">Размеры<svg class="ic10"><use href="#i-chevd"/></svg></button></section>
        <section><button class="sec">Графика<svg class="ic10"><use href="#i-chevd"/></svg></button></section>
      </div>
      <div class="scroll"><svg class="ic8 dim"><use href="#i-up"/></svg><div class="track"><div class="thumb thumb-props"></div></div><svg class="ic8"><use href="#i-down"/></svg></div>
    </div>
  </aside>
</main>
</body>
</html>
```

FILE: styles.css
```css
* { box-sizing: border-box; }
body {
  margin: 0;
  height: 100vh;
  display: flex;
  flex-direction: column;
  border: 1px solid #55555a;
  background: #fff;
  color: #363545;
  font: 10px/13px "Open Sans", "Noto Sans", sans-serif;
  overflow: hidden;
}
button { border: 0; padding: 0; margin: 0; background: none; color: inherit; font: inherit; cursor: pointer; }
h1, h2, ul, dl, dd { margin: 0; padding: 0; }
svg { fill: currentColor; flex: none; display: block; }
.sprite { position: absolute; width: 0; height: 0; }
.ic8 { width: 8px; height: 8px; }
.ic10 { width: 10px; height: 10px; }
.ic12 { width: 12px; height: 12px; }
.ic14 { width: 14px; height: 14px; }
.ic16 { width: 16px; height: 16px; }
.ic18 { width: 18px; height: 18px; }

.browser { flex: none; color: #f1f1f1; font-size: 9px; }
.tabs { height: 29px; padding-left: 5px; background: #000; display: flex; align-items: flex-end; }
.tab { width: 168px; height: 24px; padding: 0 5px 0 8px; border-radius: 7px 7px 0 0; background: #35363a; display: flex; align-items: center; gap: 5px; }
.tab-title { flex: 1; font-size: 8px; overflow: hidden; white-space: nowrap; mask-image: linear-gradient(90deg, #000 88%, transparent); }
.newtab { width: 30px; height: 24px; font-size: 16px; }
.winbtns { margin-left: auto; height: 20px; padding-right: 10px; display: flex; align-items: center; gap: 20px; }
.winbtns button { width: 12px; display: flex; justify-content: center; }
.navbar { height: 26px; padding: 0 9px 0 8px; background: #35363a; display: flex; align-items: center; gap: 8px; }
.omnibox { flex: 1; height: 19px; padding: 0 6px 0 8px; border-radius: 10px; background: #202124; color: #9aa0a6; display: flex; align-items: center; gap: 7px; }
.omnibox .ic10 { color: #9aa0a6; }
.url { flex: 1; font-family: "Noto Sans", sans-serif; white-space: nowrap; overflow: hidden; }
.url b { font-weight: 400; color: #fff; }
.omni-actions { display: flex; gap: 10px; color: #c8c8cc; }
.navbar > button { min-width: 14px; display: flex; justify-content: center; }
.navbar .profile { width: 15px; height: 15px; border-radius: 50%; background: #512da8; line-height: 15px; }

.apphead { flex: none; height: 45px; padding: 0 16px 0 10px; border-bottom: 1px solid #d4d4db; display: flex; align-items: center; }
.brand { color: #4f4e5d; text-decoration: none; font-family: Roboto, sans-serif; font-size: 17px; line-height: 28px; display: flex; align-items: center; padding-right: 8px; border-right: 1px solid #d9d9df; }
.brand b { font-weight: 600; color: #363545; margin-right: 3px; }
.brand span { font-weight: 300; }
.logo { width: 18px; height: 20px; margin-right: 6px; }
.project { flex: 1; padding-left: 11px; font-size: 11px; color: #6c6b77; }
.upgrade { height: 28px; padding: 0 12px; border-radius: 1px; background: #fbb900; font-weight: 500; color: #4a3f28; margin-right: 7px; }
.head-btn { width: 34px; height: 28px; display: flex; align-items: center; justify-content: center; color: #555464; }
.head-btn:last-child { width: 18px; margin-left: 7px; color: #363545; }

.toolbar { flex: none; height: 33px; display: flex; }
.group { display: flex; align-items: center; border-right: 1px solid #dddde3; }
.group.last { border: 0; }
.back { width: 61px; padding-left: 9px; }
.backbtn { display: flex; align-items: center; gap: 2px; font-weight: 600; color: #4b4a58; }
.tool { width: 28px; height: 28px; margin: 0 2px; border-radius: 2px; display: flex; align-items: center; justify-content: center; }
.tool.on { background: #0f75bd; color: #fff; }
.caret { width: 16px; height: 28px; padding-left: 2px; }
.caret svg { width: 8px; height: 8px; }
.wide { padding-right: 2px; }
.reset { width: 79px; color: #1c79bb; white-space: nowrap; }

.workspace { flex: 1; min-height: 0; border-top: 4px solid #cfcfd3; display: grid; grid-template-columns: 28px 225px 1fr 212px; }
.rail { background: #e2e2e8; display: flex; flex-direction: column; justify-content: center; padding-bottom: 2px; }
.rail button { height: 28px; display: flex; align-items: center; justify-content: center; }
.rail .active { background: #fff; color: #1a7abc; }

.models { min-height: 0; display: flex; flex-direction: column; box-shadow: 1px 0 4px #0003; z-index: 1; }
.models-head { flex: none; height: 54px; padding: 8px 11px 0 11px; border-bottom: 1px solid #dcdce2; display: flex; gap: 12px; }
.models-titles { flex: 1; }
.models h1 { font-size: 16px; line-height: 20px; font-weight: 500; }
.filter { display: flex; align-items: center; gap: 7px; font-size: 8px; line-height: 16px; color: #5c5b68; }
.filter svg { color: #363545; }
.models-head > button { height: 36px; }
.models-body { flex: 1; min-height: 0; display: flex; border-left: 2px solid #b0b0bd; padding-bottom: 5px; }
.tree { flex: 1; min-width: 0; list-style: none; display: grid; grid-auto-rows: minmax(25px, 1fr); color: #6a6976; }
.tree li { display: flex; align-items: center; gap: 10px; padding-right: 8px; min-width: 0; }
.tree svg, .tree button { color: #363545; }
.tree span { overflow: hidden; text-overflow: ellipsis; white-space: nowrap; }
.tree .root { background: #f2f2f7; padding-left: 10px; padding-right: 13px; gap: 6px; }
.root .vis { margin-left: 9px; }
.root button { margin-left: auto; }
.tree .l1 { padding-left: 21px; }
.tree .l2 { padding-left: 32px; }
.tree .l3 { padding-left: 43px; }
.tree .l4 { padding-left: 54px; }
.tree .l5 { padding-left: 65px; }
.tree .leaf { padding-left: 83px; }
.scroll { width: 11px; padding: 2px 0; background: #f1f1f1; display: flex; flex-direction: column; align-items: center; gap: 2px; color: #505050; }
.scroll .dim { color: #a3a3a3; }
.track { flex: 1; width: 9px; }
.thumb { background: #c1c1c1; }
.thumb-tree { height: 67%; }
.thumb-props { height: 66%; }

.canvas { position: relative; min-width: 0; min-height: 0; background: linear-gradient(#efefef, #ebebeb); }
.scene { width: 100%; height: 100%; }
.axis { fill: #fff; font-size: 9px; font-weight: 700; text-anchor: middle; }
.selbar { position: absolute; left: 50%; bottom: 11px; transform: translateX(-50%); height: 33px; padding: 0 5px; background: #363545; color: #fff; font-family: "Noto Sans", sans-serif; display: flex; align-items: center; gap: 2px; white-space: nowrap; box-shadow: 0 1px 3px #0005; }
.count { min-width: 54px; margin-right: 1px; }
.sel { width: 28px; height: 28px; border-radius: 2px; display: flex; align-items: center; justify-content: center; }
.sel.on { background: #8d8c98; }
.opacity { height: 28px; padding: 0 6px 0 8px; border-left: 1px solid #8d8c98; font-weight: 600; display: flex; align-items: center; gap: 8px; }

.props { min-height: 0; display: flex; flex-direction: column; background: #fff; box-shadow: -1px 0 3px #0003; }
.props-head { flex: none; height: 51px; padding: 0 12px 0 11px; border-bottom: 1px solid #e2e2e6; display: flex; align-items: center; gap: 13px; }
.props-head h2 { flex: 1; min-width: 0; font-size: 13px; line-height: 17px; font-weight: 500; white-space: nowrap; }
.props-head button { margin-bottom: 8px; }
.props-body { flex: 1; min-height: 0; display: flex; }
.sections { flex: 1; min-width: 0; display: flex; flex-direction: column; padding-bottom: 4px; }
.caption { flex: none; height: 31px; padding: 2px 12px 0 11px; display: flex; align-items: center; justify-content: space-between; font-size: 8px; color: #55545f; }
.caption span { font-weight: 700; color: #8c8b96; letter-spacing: 1px; }
.caption button { font-size: 9px; }
.sections section { flex: 1 1 28px; border-bottom: 1px solid #e4e4e8; display: flex; flex-direction: column; min-height: 28px; }
.sections section.open { flex: none; padding-bottom: 5px; }
.sec { flex: 1; min-height: 28px; padding: 0 15px 0 11px; display: flex; align-items: center; justify-content: space-between; font-weight: 600; color: #4c4b59; text-align: left; }
.open .sec { flex: none; }
dl { padding: 6px 15px 0 11px; }
dl div { display: grid; grid-template-columns: 1fr auto; align-items: center; margin-bottom: 9px; }
dl div:last-child { margin-bottom: 3px; }
dt { color: #85848f; }
dd { grid-column: 1; color: #5b5a67; }
dl button { grid-column: 2; grid-row: 1 / 3; margin-bottom: 3px; color: #a0a0aa; }
```
